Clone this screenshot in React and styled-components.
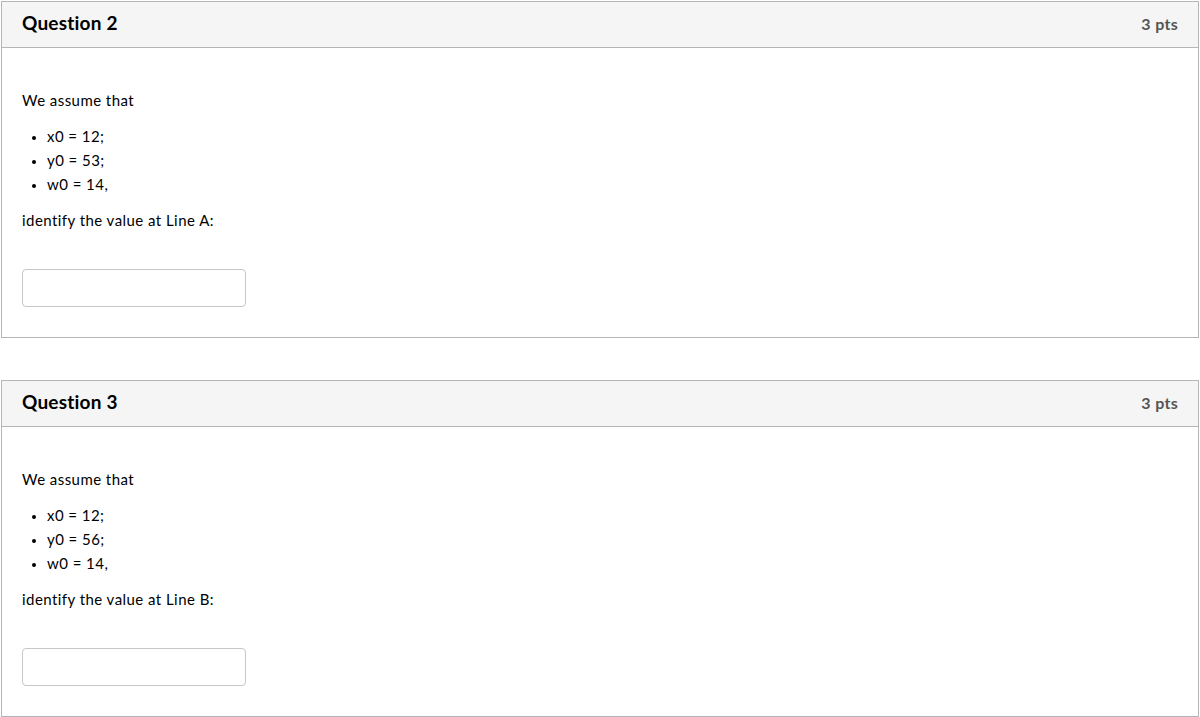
import React from "react";
import styled, { createGlobalStyle } from "styled-components";

const Global = createGlobalStyle`
  html, body { margin: 0; padding: 0; background: #fff; }
  body { font-family: Lato, "Open Sans", sans-serif; color: #2d3b45; }
`;

const Page = styled.div`
  display: flex;
  flex-direction: column;
  gap: 42px;
  padding: 1px 1px 0 1px;
`;

const Card = styled.section`
  border: 1px solid #b5b5b5;
  background: #fff;
`;

const Header = styled.header`
  display: flex;
  align-items: center;
  justify-content: space-between;
  box-sizing: border-box;
  height: 46px;
  padding: 0 20px 4px 20px;
  background: #f5f5f5;
  border-bottom: 1px solid #b5b5b5;
`;

const Title = styled.h2`
  margin: 0;
  font-size: 19px;
  font-weight: 700;
  color: #000;
  letter-spacing: 0.2px;
`;

const Points = styled.span`
  margin-top: 2px;
  font-size: 16px;
  font-weight: 700;
  color: #555;
  letter-spacing: 0.3px;
`;

const Body = styled.div`
  padding: 40px 20px 30px;
  font-size: 15px;
  letter-spacing: 0.45px;
  line-height: 24px;
  color: #000;
`;

const Para = styled.p`
  margin: 0;
`;

const List = styled.ul`
  margin: 12px 0;
  padding-left: 25px;
`;

const Item = styled.li`
  &::marker {
    font-size: 13px;
  }
`;

const Answer = styled.input`
  display: block;
  box-sizing: border-box;
  margin-top: 37px;
  width: 224px;
  height: 38px;
  border: 1px solid #c7c7c7;
  border-radius: 4px;
  background: #fff;
  outline: none;
`;

const questions = [
  { n: 2, vals: ["x0 = 12;", "y0 = 53;", "w0 = 14,"], line: "A" },
  { n: 3, vals: ["x0 = 12;", "y0 = 56;", "w0 = 14,"], line: "B" },
];

export default function App() {
  return (
    <>
      <Global />
      <Page>
        {questions.map((q) => (
          <Card key={q.n}>
            <Header>
              <Title>Question {q.n}</Title>
              <Points>3 pts</Points>
            </Header>
            <Body>
              <Para>We assume that</Para>
              <List>
                {q.vals.map((v) => (
                  <Item key={v}>{v}</Item>
                ))}
              </List>
              <Para>identify the value at Line {q.line}:</Para>
              <Answer type="text" />
            </Body>
          </Card>
        ))}
      </Page>
    </>
  );
}
